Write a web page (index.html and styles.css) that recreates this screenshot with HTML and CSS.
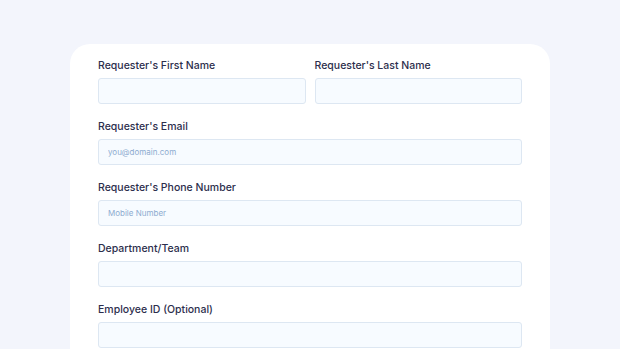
FILE: index.html
```html
<!DOCTYPE html>
<html lang="en">
<head>
  <meta charset="UTF-8">
  <title>Requester Details</title>
  <link rel="stylesheet" href="styles.css">
</head>
<body>
  <div class="card">
    <div class="row">
      <div class="field">
        <label>Requester's First Name</label>
        <input type="text">
      </div>
      <div class="field">
        <label>Requester's Last Name</label>
        <input type="text">
      </div>
    </div>

    <div class="field">
      <label>Requester's Email</label>
      <input type="email" placeholder="you@domain.com">
    </div>

    <div class="field">
      <label>Requester's Phone Number</label>
      <input type="tel" placeholder="Mobile Number">
    </div>

    <div class="field">
      <label>Department/Team</label>
      <input type="text">
    </div>

    <div class="field">
      <label>Employee ID (Optional)</label>
      <input type="text">
    </div>
  </div>
</body>
</html>
```

FILE: styles.css
```css
body {
  margin: 0;
  background: #f3f5fc;
  font-family: "Inter", "Liberation Sans", sans-serif;
  overflow: hidden;
}
.card {
  width: 480px;
  box-sizing: border-box;
  margin: 44px 0 0 70px;
  padding: 15px 28px 40px;
  background: #fff;
  border-radius: 20px;
  display: flex;
  flex-direction: column;
  gap: 16px;
}
.row {
  display: flex;
  gap: 9px;
}
.row .field {
  flex: 1;
}
.field {
  display: flex;
  flex-direction: column;
  gap: 5px;
}
.field label {
  font-size: 10.5px;
  line-height: 14px;
  font-weight: 500;
  color: #2c2e4c;
}
.field input {
  height: 26px;
  box-sizing: border-box;
  border: 1px solid #dde7f2;
  border-radius: 3px;
  background: #f7fbff;
  padding: 0 9px;
  font-family: "Inter", "Liberation Sans", sans-serif;
  font-size: 8px;
  outline: none;
}
.field input::placeholder {
  color: #8eabd0;
}
```
